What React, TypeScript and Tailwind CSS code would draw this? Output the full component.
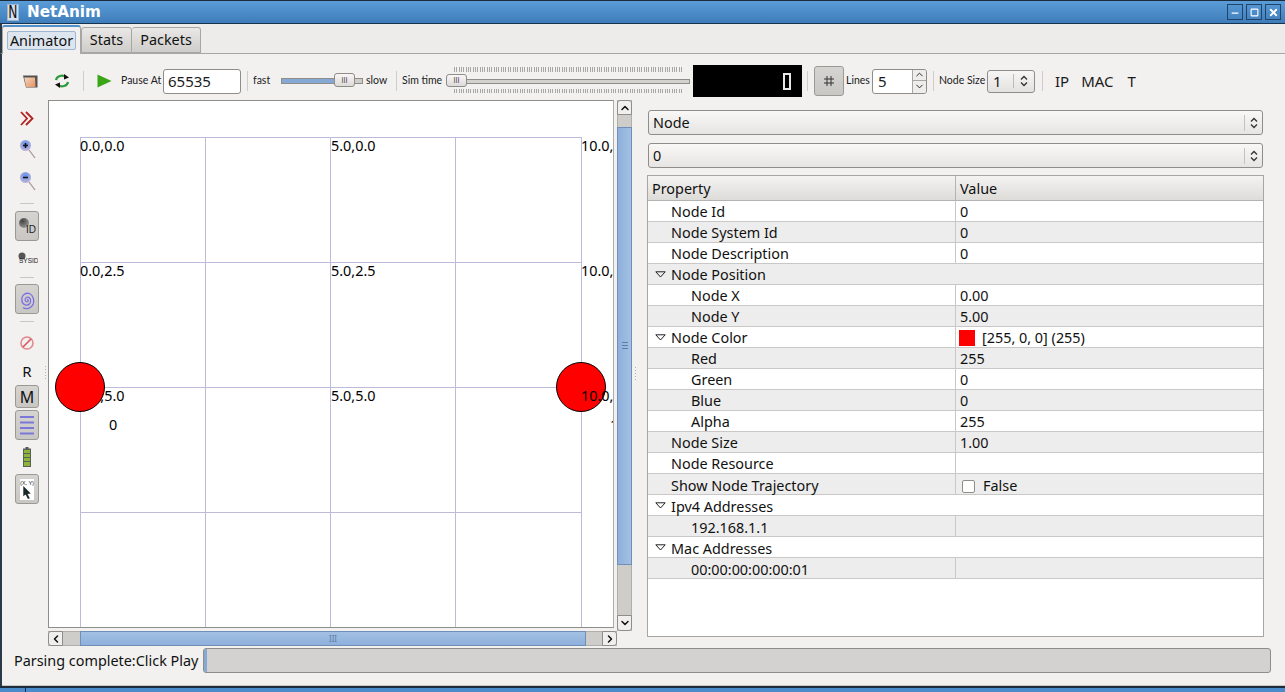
import React from 'react';
import { ChevronUp, ChevronDown, ChevronLeft, ChevronRight, Minus, Square, X } from 'lucide-react';

const ticks = Array.from({ length: 98 }, (_, i) => Math.round(i * 2.34));

const rows = [
  { label: 'Node Id', value: '0', depth: 0 },
  { label: 'Node System Id', value: '0', depth: 0 },
  { label: 'Node Description', value: '0', depth: 0 },
  { label: 'Node Position', depth: 0, group: true },
  { label: 'Node X', value: '0.00', depth: 1 },
  { label: 'Node Y', value: '5.00', depth: 1 },
  { label: 'Node Color', value: '[255, 0, 0] (255)', depth: 0, arrow: true, swatch: true },
  { label: 'Red', value: '255', depth: 1 },
  { label: 'Green', value: '0', depth: 1 },
  { label: 'Blue', value: '0', depth: 1 },
  { label: 'Alpha', value: '255', depth: 1 },
  { label: 'Node Size', value: '1.00', depth: 0 },
  { label: 'Node Resource', value: '', depth: 0 },
  { label: 'Show Node Trajectory', value: 'False', depth: 0, check: true },
  { label: 'Ipv4 Addresses', depth: 0, group: true },
  { label: '192.168.1.1', value: '', depth: 1 },
  { label: 'Mac Addresses', depth: 0, group: true },
  { label: '00:00:00:00:00:01', value: '', depth: 1 },
];

const labels = [
  { x: 31, y: 36, t: '0.0,0.0' },
  { x: 282, y: 36, t: '5.0,0.0' },
  { x: 532, y: 36, t: '10.0,0.0' },
  { x: 31, y: 161, t: '0.0,2.5' },
  { x: 282, y: 161, t: '5.0,2.5' },
  { x: 532, y: 161, t: '10.0,2.5' },
  { x: 31, y: 286, t: '0.0,5.0' },
  { x: 282, y: 286, t: '5.0,5.0' },
  { x: 60, y: 315, t: '0' },
  { x: 561, y: 315, t: '1' },
];

function Sep({ className = '' }: { className?: string }) {
  return <div className={`w-px shrink-0 bg-[#cfcdca] ${className}`} />;
}

function HSep({ className = '' }: { className?: string }) {
  return <div className={`w-[14px] h-px bg-[#c9c7c4] ${className}`} />;
}

function TriDown({ className = '' }: { className?: string }) {
  return (
    <svg width="11" height="7" viewBox="0 0 11 7" className={className}>
      <path d="M0.8 0.8 H10.2 L5.5 6 Z" fill="none" stroke="#222" strokeWidth="1" />
    </svg>
  );
}

function ComboArrows() {
  return (
    <svg width="8" height="12" viewBox="0 0 8 12">
      <path d="M1 4.5 L4 1.5 L7 4.5 M1 7.5 L4 10.5 L7 7.5" fill="none" stroke="#333" strokeWidth="1.3" />
    </svg>
  );
}

function ToggleBtn({ className = '', children }: { className?: string; children: React.ReactNode }) {
  return (
    <div className={`w-[24px] flex items-center justify-center rounded-[3px] border border-[#9b9994] bg-gradient-to-b from-[#d6d4d1] to-[#c9c7c4] ${className}`}>
      {children}
    </div>
  );
}

function Magnifier({ minus }: { minus?: boolean }) {
  return (
    <svg width="18" height="20" viewBox="0 0 18 20">
      <defs>
        <radialGradient id={minus ? 'mg2' : 'mg1'} cx="0.5" cy="0.35" r="0.7">
          <stop offset="0" stopColor="#5f8ff0" />
          <stop offset="1" stopColor="#c9b9d4" />
        </radialGradient>
      </defs>
      <line x1="10" y1="11" x2="16" y2="19" stroke="#a98f98" strokeWidth="1.2" />
      <circle cx="6.5" cy="6.5" r="5.5" fill={`url(#${minus ? 'mg2' : 'mg1'})`} />
      <path d={minus ? 'M4 6.5 H9' : 'M4 6.5 H9 M6.5 4 V9'} stroke="#111" strokeWidth="1.5" />
    </svg>
  );
}

export default function App() {
  return (
    <div className="w-[1285px] h-[692px] overflow-hidden flex flex-col bg-[#edecea] text-[#111] text-[14.4px] font-['Noto_Sans','Open_Sans',sans-serif]">
      {/* window title */}
      <div className="h-[24px] shrink-0 flex items-center border-t border-[#1d2b3a] border-b border-b-[#16334f] bg-gradient-to-b from-[#5a9cd8] to-[#3f7dba]">
        <div className="ml-[7px] w-[12px] h-[17px] bg-[#d5dfea] border border-[#9ab6d4] flex items-center justify-center text-[17px] leading-none text-[#111] font-['DejaVu_Sans_Condensed','DejaVu_Sans',sans-serif]">
          <span className="scale-x-[0.8]">N</span>
        </div>
        <span className="ml-[8px] text-white font-bold text-[15.2px] font-['DejaVu_Sans',sans-serif]">NetAnim</span>
        <div className="ml-auto mr-[4px] flex gap-[3px]">
          <div className="w-[16px] h-[16px] border border-[#1f4468] flex items-end justify-center text-white pb-[1px]">
            <Minus size={10} strokeWidth={3} />
          </div>
          <div className="w-[16px] h-[16px] border border-[#1f4468] flex items-center justify-center text-white">
            <Square size={9} strokeWidth={3} />
          </div>
          <div className="w-[16px] h-[16px] border border-[#1f4468] flex items-center justify-center text-white">
            <X size={11} strokeWidth={4} />
          </div>
        </div>
      </div>

      {/* tabs */}
      <div className="h-[29px] shrink-0 flex items-end border-l-2 border-[#2b3a48] bg-[#edecea]">
        <div className="relative w-[79px] h-[29px] bg-[#f2f1f0] border-x border-[#a8a6a2] border-t-2 border-t-[#4f8fcb] rounded-t-[3px] -mb-px z-10">
          <div className="absolute left-[4px] top-[4px] w-[69px] h-[19px] border border-[#9db7d3] bg-[#dde6ef] rounded-[2px] flex items-center justify-center">
            Animator
          </div>
        </div>
        <div className="w-[51px] h-[26px] flex items-center justify-center bg-gradient-to-b from-[#e9e8e6] to-[#cfcdca] border border-[#a8a6a2] rounded-t-[3px]">Stats</div>
        <div className="w-[69px] h-[26px] flex items-center justify-center bg-gradient-to-b from-[#e9e8e6] to-[#cfcdca] border border-l-0 border-[#a8a6a2] rounded-t-[3px]">Packets</div>
      </div>

      {/* tab page */}
      <div className="flex-1 min-h-0 flex flex-col border-l-2 border-[#2b3a48] border-t border-t-[#a8a6a2] bg-[#f2f1f0]">
        {/* toolbar */}
        <div className="h-[46px] shrink-0 pt-[8px] flex items-center text-[#1b1b1b] text-[10.5px] font-['Lato','Noto_Sans',sans-serif]">
          <svg width="15" height="13" viewBox="0 0 15 13" className="ml-[21px] shrink-0">
            <defs>
              <linearGradient id="bk" x1="0" y1="0" x2="1" y2="1">
                <stop offset="0" stopColor="#f5d9c4" />
                <stop offset="1" stopColor="#e58f5c" />
              </linearGradient>
            </defs>
            <path d="M0 0.5 H14.5 V12.5 H3 Z" fill="#55524e" />
            <path d="M1.2 2.5 H12 L12.5 12 H3.2 Z" fill="url(#bk)" />
          </svg>
          <svg width="16" height="16" viewBox="0 0 16 16" className="ml-[16px] shrink-0">
            <path d="M2 7 A6 5 0 0 1 12 4" fill="none" stroke="#2f9a3c" strokeWidth="2.2" />
            <path d="M14 9 A6 5 0 0 1 4 12" fill="none" stroke="#2f9a3c" strokeWidth="2.2" />
            <path d="M10 1 L15 4.5 L10 6.5 Z" fill="#111" />
            <path d="M6 9.5 L1 11.5 L6 15 Z" fill="#111" />
          </svg>
          <Sep className="ml-[13px] h-[20px]" />
          <svg width="15" height="14" viewBox="0 0 15 14" className="ml-[13px] shrink-0">
            <path d="M0.5 0.5 L14.5 7 L0.5 13.5 Z" fill="#3aa517" />
          </svg>
          <span className="ml-[9px] w-[42px] shrink-0 whitespace-nowrap">Pause At</span>
          <div className="w-[78px] shrink-0 h-[25px] bg-white border border-[#8f8d89] rounded-[3px] flex items-center pl-[4px] text-[15px] font-['Noto_Sans',sans-serif]">65535</div>
          <Sep className="ml-[6px] h-[20px]" />
          <span className="ml-[5px] w-[28px] shrink-0">fast</span>
          <div className="relative w-[82px] shrink-0 h-[6px] border border-[#8f8d89] bg-[#cfcdca]">
            <div className="w-[54px] h-full bg-[#86a9d4]" />
            <div className="absolute left-[52px] -top-[6px] w-[21px] h-[14px] bg-gradient-to-b from-[#f8f7f6] to-[#dddbd8] border border-[#8f8d89] rounded-[3px] flex items-center justify-center text-[7px] leading-none text-[#444]">
              III
            </div>
          </div>
          <span className="ml-[3px] w-[30px] shrink-0">slow</span>
          <Sep className="h-[20px]" />
          <span className="ml-[5px] w-[44px] shrink-0 whitespace-nowrap">Sim time</span>
          <div className="relative w-[244px] shrink-0 h-[32px] flex items-center">
            <div className="w-full h-[5px] bg-[#d4d2cf] border border-[#8f8d89]" />
            <div className="absolute left-0 top-[9px] w-[21px] h-[13px] bg-gradient-to-b from-[#f8f7f6] to-[#dddbd8] border border-[#8f8d89] rounded-[3px] flex items-center justify-center text-[7px] leading-none text-[#444]">
              III
            </div>
            <svg width="244" height="32" viewBox="0 0 244 32" className="absolute left-0 top-0">
              {ticks.map((t) => (
                <g key={t} stroke="#a9a7a3" strokeWidth="1">
                  <line x1={8.5 + t} x2={8.5 + t} y1="2" y2="7" />
                  <line x1={8.5 + t} x2={8.5 + t} y1="24" y2="28" />
                </g>
              ))}
            </svg>
          </div>
          <div className="ml-[3px] w-[109px] shrink-0 h-[32px] bg-black flex items-center justify-end pr-[11px]">
            <div className="w-[8px] h-[17px] border-2 border-[#e8e8e8]" />
          </div>
          <Sep className="ml-[5px] h-[20px]" />
          <div className="ml-[6px] w-[30px] shrink-0 h-[30px] rounded-[3px] border border-[#9b9994] bg-gradient-to-b from-[#d6d4d1] to-[#c9c7c4] flex items-center justify-center">
            <svg width="12" height="12" viewBox="0 0 12 12">
              <path d="M4 1 V11 M8 1 V11 M1 4 H11 M1 8 H11" stroke="#333" strokeWidth="1" />
            </svg>
          </div>
          <span className="ml-[2px] w-[26px] shrink-0">Lines</span>
          <div className="w-[55px] shrink-0 h-[25px] bg-white border border-[#8f8d89] rounded-[3px] flex items-center pl-[5px] text-[15px] font-['Noto_Sans',sans-serif]">
            5
            <div className="ml-auto w-[14px] h-full flex flex-col border-l border-[#a8a6a2] bg-[#eeedeb] rounded-r-[3px]">
              <div className="h-1/2 flex items-center justify-center border-b border-[#a8a6a2]">
                <ChevronUp size={11} strokeWidth={2} />
              </div>
              <div className="h-1/2 flex items-center justify-center">
                <ChevronDown size={11} strokeWidth={2} />
              </div>
            </div>
          </div>
          <Sep className="ml-[6px] h-[20px]" />
          <span className="ml-[5px] w-[48px] shrink-0 whitespace-nowrap">Node Size</span>
          <div className="w-[48px] shrink-0 h-[23px] border border-[#8f8d89] rounded-[3px] bg-gradient-to-b from-[#f7f6f5] to-[#e4e2df] flex items-center pl-[5px] text-[15px] font-['Noto_Sans',sans-serif]">
            1
            <div className="ml-auto w-[21px] h-[14px] border-l border-[#bdbbb7] flex items-center justify-center">
              <ComboArrows />
            </div>
          </div>
          <Sep className="ml-[7px] h-[20px]" />
          <div className="flex text-[15px] font-['Noto_Sans',sans-serif]">
            <span className="ml-[12px]">IP</span>
            <span className="ml-[12px]">MAC</span>
            <span className="ml-[14px]">T</span>
          </div>
        </div>

        {/* main area */}
        <div className="h-[548px] shrink-0 flex">
          {/* left tools */}
          <div className="w-[46px] shrink-0 flex flex-col items-center relative">
            <div className="w-[25px] flex flex-col items-center translate-x-[2px]">
              <svg width="14" height="15" viewBox="0 0 14 15" className="mt-[11px]">
                <path d="M1 1 L7 7.5 L1 14 M6 1 L12.5 7.5 L6 14" fill="none" stroke="#b42020" strokeWidth="1.8" />
              </svg>
              <div className="mt-[13px] ml-[2px]"><Magnifier /></div>
              <div className="mt-[12px] ml-[2px]"><Magnifier minus /></div>
              <HSep className="mt-[12px]" />
              <ToggleBtn className="mt-[7px] h-[30px]">
                <svg width="20" height="18" viewBox="0 0 20 18">
                  <defs>
                    <radialGradient id="idg" cx="0.35" cy="0.3" r="0.85">
                      <stop offset="0" stopColor="#444" />
                      <stop offset="1" stopColor="#a5a3a0" />
                    </radialGradient>
                  </defs>
                  <circle cx="7" cy="6" r="5" fill="url(#idg)" />
                  <text x="9" y="16" fontSize="10" fill="#222" fontFamily="Liberation Sans">ID</text>
                </svg>
              </ToggleBtn>
              <svg width="22" height="13" viewBox="0 0 22 13" className="mt-[11px]">
                <circle cx="6" cy="4" r="3.5" fill="#555" />
                <text x="3" y="11" fontSize="6.5" fill="#222" fontFamily="Liberation Sans">SYSID</text>
              </svg>
              <HSep className="mt-[12px]" />
              <ToggleBtn className="mt-[6px] h-[30px]">
                <svg width="16" height="23" viewBox="0 0 14 20">
                  <path d="M7 10 C8.5 10 8.5 12 7 12 C5 12 4.5 9 7 8 C10 7.5 11 11 9.5 13.5 C7.5 16 3 15 2.5 11 C2 6 6 3.5 9.5 5 C12.5 6.5 13.5 11 12.5 14 C11 18 6 19 3.5 17" fill="none" stroke="#7a6ee0" strokeWidth="1.1" />
                </svg>
              </ToggleBtn>
              <HSep className="mt-[7px]" />
              <svg width="16" height="16" viewBox="0 0 16 16" className="mt-[13px]">
                <circle cx="8" cy="8" r="6" fill="none" stroke="#e08a8f" strokeWidth="1.6" />
                <path d="M4 12 L12 4" stroke="#d8555c" strokeWidth="1.6" />
              </svg>
              <span className="mt-[10px] h-[20px] leading-[20px] text-[15px]">R</span>
              <ToggleBtn className="mt-[4px] h-[23px] text-[16px]">M</ToggleBtn>
              <ToggleBtn className="mt-[2px] h-[30px]">
                <svg width="14" height="22" viewBox="0 0 14 22">
                  <path d="M0 3 H14 M0 8.5 H14 M0 14 H14 M0 19.5 H14" stroke="#7b78d8" strokeWidth="2" />
                </svg>
              </ToggleBtn>
              <svg width="8" height="20" viewBox="0 0 8 20" className="mt-[7px]">
                <rect x="2.5" y="0" width="3" height="2" fill="#555" />
                <rect x="0" y="1.5" width="8" height="18.5" fill="#5a5f58" />
                <path d="M1 3 H7 V6 H1 Z M1 7 H7 V10 H1 Z M1 11 H7 V14 H1 Z M1 15 H7 V19 H1 Z" fill="#8ab53a" />
              </svg>
              <ToggleBtn className="mt-[7px] h-[30px]">
                <div className="relative w-[14px] h-[21px] bg-white flex justify-center text-[6px] leading-[8px] text-[#333] whitespace-nowrap">
                  (X, Y)
                  <svg width="11" height="14" viewBox="0 0 11 15" className="absolute left-[2px] top-[7px]">
                    <path d="M1 0 L1 11 L3.5 9 L6 14 L8 13 L5.5 8.5 L9 8 Z" fill="#1d2a2a" />
                  </svg>
                </div>
              </ToggleBtn>
            </div>
            <div className="absolute right-[1px] top-[265px] w-[3px] h-[16px] bg-[radial-gradient(#b5b3af_1px,transparent_1px)] bg-[length:3px_3px]" />
          </div>

          {/* graphics view */}
          <div className="w-[584px] shrink-0 grid grid-cols-[566px_18px] grid-rows-[531px_17px]">
            <div className="relative h-[528px] overflow-hidden bg-white border border-[#8f8d89] border-r-[#b0aeaa]">
              {/* grid lines */}
              {[31, 156, 281, 406, 532].map((x) => (
                <div key={x} className="absolute top-[36px] bottom-0 w-px bg-[#bdbbda]" style={{ left: x }} />
              ))}
              {[36, 161, 286, 411].map((y) => (
                <div key={y} className="absolute left-[31px] w-[502px] h-px bg-[#bdbbda]" style={{ top: y }} />
              ))}
              {labels.map((l) => (
                <span key={l.t + l.x} className="absolute whitespace-nowrap leading-[20px] text-[14.4px] text-black" style={{ left: l.x, top: l.y - 1 }}>
                  {l.t}
                </span>
              ))}
              {/* nodes */}
              <div className="absolute left-[6px] top-[261px] w-[50px] h-[50px] rounded-full bg-[#ff0000] border border-black" />
              <div className="absolute left-[507px] top-[261px] w-[50px] h-[50px] rounded-full bg-[#ff0000] border border-black" />
              <span className="absolute left-[532px] top-[285px] whitespace-nowrap leading-[20px] text-[14.4px] text-black">10.0,5.0</span>
            </div>

            {/* vertical scrollbar */}
            <div className="ml-[3px] w-[15px] flex flex-col bg-[#cfcdca] border-x border-[#b0aeaa]">
              <div className="h-[15px] bg-[#f0efed] border border-[#8f8d89] -mx-px rounded-t-[3px] flex items-center justify-center">
                <ChevronUp size={12} strokeWidth={3} />
              </div>
              <div className="h-[12px]" />
              <div className="h-[438px] bg-gradient-to-r from-[#8eb0dc] to-[#a3c0e3] border border-[#6f8fb8] -mx-px flex items-center justify-center">
                <div className="w-[6px] h-[7px] -mt-[2px] border-y border-[#5c7ea9] relative before:absolute before:left-0 before:right-0 before:top-[2px] before:h-px before:bg-[#5c7ea9]" />
              </div>
              <div className="flex-1" />
              <div className="h-[16px] bg-[#f0efed] border border-[#8f8d89] -mx-px rounded-b-[3px] flex items-center justify-center">
                <ChevronDown size={12} strokeWidth={3} />
              </div>
            </div>

            {/* horizontal scrollbar */}
            <div className="w-[569px] h-[15px] flex bg-[#cfcdca] border-y border-[#b0aeaa]">
              <div className="w-[15px] -my-px bg-[#f0efed] border border-[#8f8d89] rounded-l-[3px] flex items-center justify-center">
                <ChevronLeft size={12} strokeWidth={3} />
              </div>
              <div className="w-[17px]" />
              <div className="w-[506px] -my-px bg-gradient-to-b from-[#a3c0e3] to-[#8eb0dc] border border-[#6f8fb8] flex items-center justify-center text-[8px] leading-none text-[#5c7ea9]">
                III
              </div>
              <div className="flex-1" />
              <div className="w-[15px] -my-px bg-[#f0efed] border border-[#8f8d89] rounded-r-[3px] flex items-center justify-center">
                <ChevronRight size={12} strokeWidth={3} />
              </div>
            </div>
            <div />
          </div>

          {/* splitter */}
          <div className="w-[15px] shrink-0 flex items-center">
            <div className="ml-[2px] w-[3px] h-[16px] bg-[radial-gradient(#b5b3af_1px,transparent_1px)] bg-[length:3px_3px]" />
          </div>

          {/* property panel */}
          <div className="w-[617px] shrink-0 flex flex-col">
            <div className="mt-[10px] ml-[1px] mr-[1px] h-[25px] flex items-center px-[4px] border border-[#8f8d89] rounded-[3px] bg-gradient-to-b from-[#f9f8f7] to-[#e7e5e3]">
              Node
              <div className="ml-auto h-[16px] pl-[5px] border-l border-[#c4c2be] flex items-center"><ComboArrows /></div>
            </div>
            <div className="mt-[8px] ml-[1px] mr-[1px] h-[25px] flex items-center px-[4px] border border-[#8f8d89] rounded-[3px] bg-gradient-to-b from-[#f9f8f7] to-[#e7e5e3]">
              0
              <div className="ml-auto h-[16px] pl-[5px] border-l border-[#c4c2be] flex items-center"><ComboArrows /></div>
            </div>
            <div className="mt-[7px] h-[462px] border border-[#a8a6a2] bg-white overflow-hidden">
              <div className="h-[25px] flex bg-gradient-to-b from-[#f4f3f2] to-[#dedcd9] border-b border-[#b5b3af]">
                <div className="w-[308px] pl-[4px] leading-[26px] border-r border-[#b5b3af]">Property</div>
                <div className="pl-[4px] leading-[26px]">Value</div>
              </div>
              {rows.map((r, i) => (
                <div key={r.label} className={`h-[21px] flex items-center border-b border-[#c9c8c6] ${i % 2 ? 'bg-[#eeeded]' : 'bg-white'}`}>
                  <div className={`h-full w-[308px] shrink-0 flex items-center ${r.group ? '' : 'border-r border-[#c9c8c6]'} ${r.depth ? 'pl-[43px]' : 'pl-[23px]'} relative`}>
                    {(r.group || r.arrow) && <TriDown className="absolute left-[7px] top-[7px]" />}
                    <span className={`whitespace-nowrap ${i >= 13 ? 'translate-y-[2px]' : 'translate-y-px'}`}>{r.label}</span>
                  </div>
                  {!r.group && (
                    <div className={`pl-[4px] flex items-center whitespace-nowrap ${i >= 13 ? 'translate-y-[2px]' : 'translate-y-px'}`}>
                      {r.swatch && <span className="w-[16px] h-[16px] bg-[#ff0000] -ml-px mr-[7px]" />}
                      {r.check && <span className="w-[13px] h-[13px] bg-white border border-[#8f8d89] rounded-[2px] ml-[2px] mr-[8px]" />}
                      {r.value}
                    </div>
                  )}
                </div>
              ))}
            </div>
          </div>
        </div>

        {/* status row */}
        <div className="h-[25px] shrink-0 flex items-center">
          <span className="ml-[12px] w-[189px] shrink-0 whitespace-nowrap">Parsing complete:Click Play</span>
          <div className="w-[1068px] h-[25px] bg-[#d3d2d0] border border-[#8f8d89] rounded-[3px] overflow-hidden">
            <div className="w-[3px] h-full bg-[#86a9d4]" />
          </div>
        </div>
        <div className="flex-1 border-b border-[#c9c7c4]" />
      </div>

      {/* desktop strip */}
      <div className="h-[6px] shrink-0 flex border-t-2 border-[#1d2b3a] bg-[#4a8ccb]">
        <div className="w-[26px] border-r border-[#1d2b3a]" />
      </div>
    </div>
  );
}
